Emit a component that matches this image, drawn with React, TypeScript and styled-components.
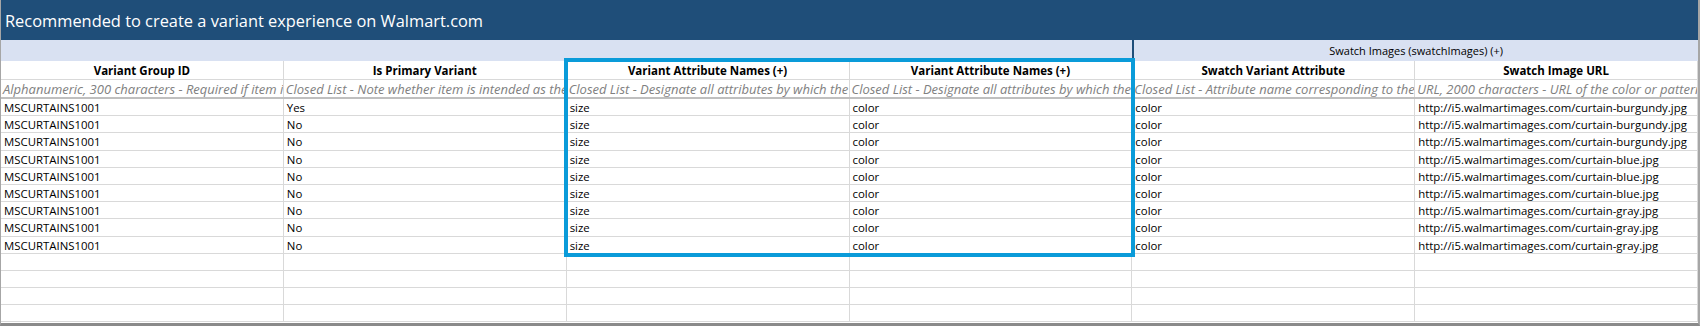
import styled, { createGlobalStyle } from "styled-components"

const GlobalStyle = createGlobalStyle`
    html, body {
        margin: 0;
        padding: 0;
        background: #ffffff;
    }
    body {
        font-family: "Open Sans", Lato, "Liberation Sans", sans-serif;
        color: #000000;
    }
`

const columns = [
    {
        title: "Variant Group ID",
        desc: "Alphanumeric, 300 characters - Required if item is part of a variant group"
    },
    {
        title: "Is Primary Variant",
        desc: "Closed List - Note whether item is intended as the primary variant in the group"
    },
    {
        title: "Variant Attribute Names (+)",
        desc: "Closed List - Designate all attributes by which the item varies"
    },
    {
        title: "Variant Attribute Names (+)",
        desc: "Closed List - Designate all attributes by which the item varies"
    },
    {
        title: "Swatch Variant Attribute",
        desc: "Closed List - Attribute name corresponding to the swatch"
    },
    {
        title: "Swatch Image URL",
        desc: "URL, 2000 characters - URL of the color or pattern swatch image"
    }
]

const swatches = [
    "burgundy", "burgundy", "burgundy",
    "blue", "blue", "blue",
    "gray", "gray", "gray"
]

const rows = swatches.map((c, i) => [
    "MSCURTAINS1001",
    i === 0 ? "Yes" : "No",
    "size",
    "color",
    "color",
    `http://i5.walmartimages.com/curtain-${c}.jpg`
])

const emptyRows = 4

const App = () => {
    return (
        <>
            <GlobalStyle />
            <Sheet>
                <TitleBar>Recommended to create a variant experience on Walmart.com</TitleBar>
                <GroupBand>
                    <GroupLabel>Swatch Images (swatchImages) (+)</GroupLabel>
                </GroupBand>
                <HeadRow>
                    {columns.map((col, key) => (
                        <HeaderCell key={key}>{col.title}</HeaderCell>
                    ))}
                </HeadRow>
                <DescRow>
                    {columns.map((col, key) => (
                        <DescCell key={key}>{col.desc}</DescCell>
                    ))}
                </DescRow>
                {rows.map((r, key) => (
                    <Row key={key}>
                        {r.map((v, k) => (
                            <Cell key={k}>{v}</Cell>
                        ))}
                    </Row>
                ))}
                {Array.from({ length: emptyRows }).map((_, key) => (
                    <Row key={`e${key}`}>
                        {columns.map((_, k) => (
                            <Cell key={k} />
                        ))}
                    </Row>
                ))}
                <Highlight />
            </Sheet>
        </>
    )
}

export default App

const Sheet = styled.div`
    position: relative;
    box-sizing: border-box;
    width: 1700px;
    height: 326px;
    overflow: hidden;
    border-left: 1px solid #a6a6a6;
    border-right: 2px solid #a6a6a6;
    border-bottom: 3px solid #8a8a8a;
    background: #ffffff;
`

const TitleBar = styled.div`
    height: 40px;
    display: flex;
    align-items: center;
    padding-left: 4px;
    background: #1f4e79;
    color: #ffffff;
    font-size: 16.4px;
    white-space: nowrap;
`

const GroupBand = styled.div`
    height: 21px;
    display: grid;
    grid-template-columns: repeat(6, 1fr);
    background: #d9e1f2;
`

const GroupLabel = styled.div`
    grid-column: 5 / span 2;
    display: flex;
    align-items: center;
    justify-content: center;
    border-left: 2px solid #1f4e79;
    font-size: 11px;
`

const Row = styled.div`
    height: 17.2px;
    display: grid;
    grid-template-columns: repeat(6, 1fr);
`

const HeadRow = styled(Row)`
    height: 19px;
`

const DescRow = styled(Row)`
    height: 19px;
    box-sizing: border-box;
    border-bottom: 2px solid #bfbfbf;
`

const Cell = styled.div`
    box-sizing: border-box;
    min-width: 0;
    display: flex;
    align-items: center;
    padding: 1px 3px 0;
    border-right: 1px solid #d9d9d9;
    border-bottom: 1px solid #d9d9d9;
    font-size: 11.4px;
    white-space: nowrap;
    overflow: hidden;
`

const HeaderCell = styled(Cell)`
    justify-content: center;
    font-weight: 700;
    font-size: 11.5px;
`

const DescCell = styled(Cell)`
    border-bottom: none;
    font-style: italic;
    font-size: 13px;
    color: #808080;
    padding-left: 2px;
`

const Highlight = styled.div`
    position: absolute;
    left: 563px;
    top: 58px;
    width: 571px;
    height: 199px;
    box-sizing: border-box;
    border: 4px solid #0a9bd9;
    pointer-events: none;
`
